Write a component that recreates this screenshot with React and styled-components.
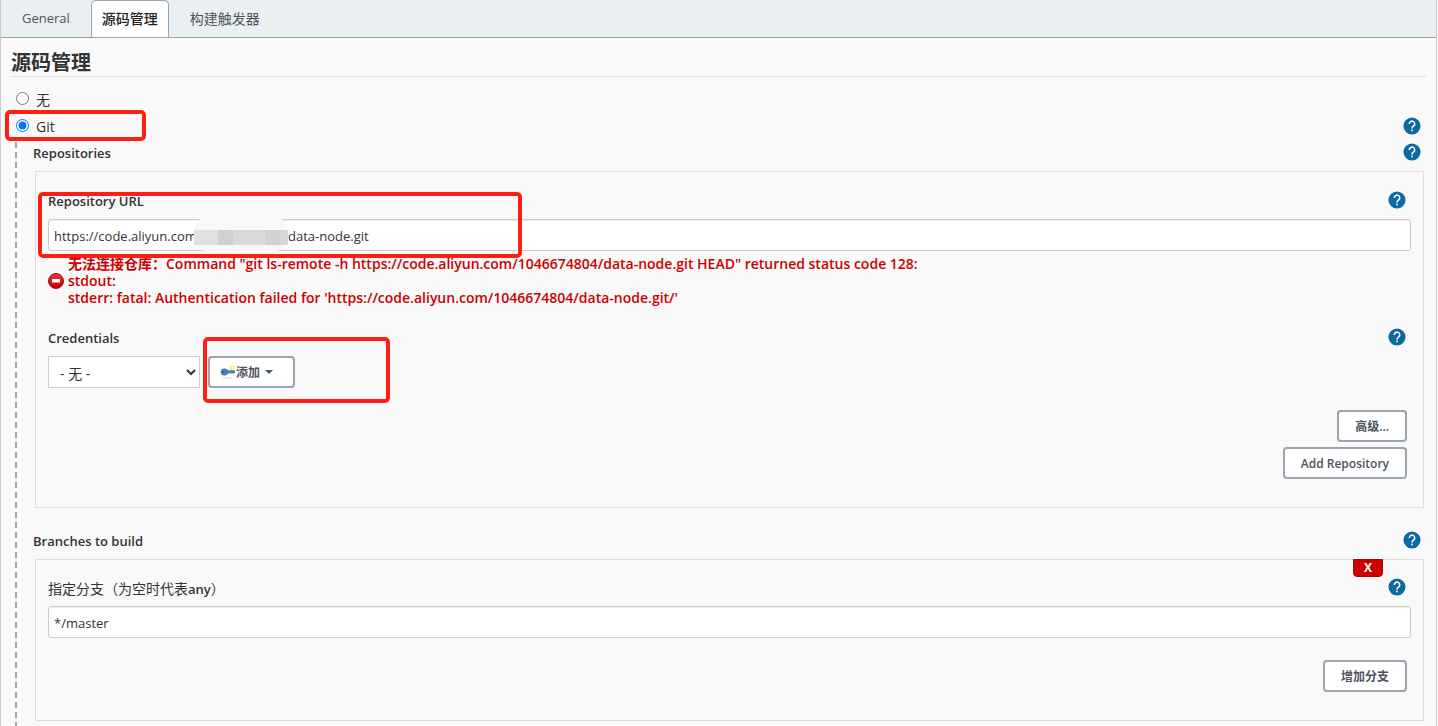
import { useState } from 'react'
import styled, { createGlobalStyle, css } from 'styled-components'

const tabs = ['General', '源码管理', '构建触发器']

const HelpIcon = () => (
  <svg width="18" height="18" viewBox="0 0 24 24" aria-hidden="true">
    <circle cx="12" cy="12" r="11.4" fill="#0b6aa2" />
    <path d="M8.4 9.2a3.6 3.6 0 1 1 5.9 2.7c-1.3 1.1-2.3 1.7-2.3 3.4" fill="none" stroke="#fff" strokeWidth="2.1" />
    <rect x="10.9" y="16.8" width="2.2" height="2.2" fill="#fff" />
  </svg>
)

const Help = ({ topic }) => (
  <HelpLink href="#help" aria-label={`Help for ${topic}`}>
    <HelpIcon />
  </HelpLink>
)

const ErrorIcon = () => (
  <svg width="16" height="16" viewBox="0 0 16 16" aria-hidden="true">
    <defs>
      <linearGradient id="stop" x1="0" y1="0" x2="0" y2="1">
        <stop offset="0" stopColor="#e8373b" />
        <stop offset="1" stopColor="#c00008" />
      </linearGradient>
    </defs>
    <circle cx="8" cy="8" r="7.5" fill="url(#stop)" stroke="#9c0a10" />
    <rect x="4" y="6" width="8" height="3.4" rx="0.6" fill="#fff" />
  </svg>
)

const KeyIcon = () => (
  <svg width="16" height="16" viewBox="0 0 16 16" aria-hidden="true">
    <ellipse cx="7" cy="13.8" rx="6" ry="0.9" fill="#e6e6e6" />
    <path d="M7 6.2h7.4l.6 1v1.6l-1.4.9-1-.8-1 .9-1.2-.8-1 .6H7z" fill="#4a7fb8" />
    <ellipse cx="4.4" cy="8" rx="3.5" ry="3.3" fill="#4a7fb8" stroke="#3f6ea3" strokeWidth="0.6" />
    <circle cx="2.6" cy="7.8" r="0.8" fill="#2a5184" />
    <circle cx="11.8" cy="3.6" r="2.4" fill="#fdf04c" />
    <circle cx="11.8" cy="3.6" r="1" fill="#fffce0" />
  </svg>
)

export default function App() {
  const [activeTab, setActiveTab] = useState('源码管理')
  const [scm, setScm] = useState('git')
  const [url, setUrl] = useState('https://code.aliyun.com/xxxxxxxxxxxx/data-node.git')
  const [branch, setBranch] = useState('*/master')

  return (
    <>
      <GlobalStyle />
      <Page>
        <TabBar>
          {tabs.map((tab) => (
            <Tab
              key={tab}
              type="button"
              $active={tab === activeTab}
              $small={tab === 'General'}
              onClick={() => setActiveTab(tab)}
            >
              {tab}
            </Tab>
          ))}
        </TabBar>
        <Form onSubmit={(e) => e.preventDefault()}>
          <Heading>源码管理</Heading>
          <RadioRow>
            <RadioLabel>
              <Radio type="radio" name="scm" checked={scm === 'none'} onChange={() => setScm('none')} />
              无
            </RadioLabel>
          </RadioRow>
          <RadioRow>
            <RadioLabel>
              <Radio type="radio" name="scm" checked={scm === 'git'} onChange={() => setScm('git')} />
              Git
            </RadioLabel>
            <Help topic="Git" />
            <GitMark />
          </RadioRow>

          <Nested>
            <LabelRow>
              <span>Repositories</span>
              <Help topic="Repositories" />
            </LabelRow>
            <Box>
              <Field>
                <LabelRow>
                  <label htmlFor="url">Repository URL</label>
                  <Help topic="Repository URL" />
                </LabelRow>
                <TextInput id="url" type="text" value={url} onChange={(e) => setUrl(e.target.value)} />
                <Mosaic>
                  <Pixel $color="#dfe0e0" $grow={3} />
                  <Pixel $color="#cfd0d0" $grow={2} />
                  <Pixel $color="#d9d9d9" $grow={4} />
                  <Pixel $color="#d1d1d1" $grow={2} />
                  <Pixel $color="#d7d7d6" $grow={1} />
                </Mosaic>
                <UrlMark />
              </Field>
              <ErrorMessage role="alert">
                <ErrorIcon />
                <div>
                  无法连接仓库：Command "git ls-remote -h https://code.aliyun.com/1046674804/data-node.git HEAD" returned status code 128:
                  <br />
                  stdout:
                  <br />
                  stderr: fatal: Authentication failed for 'https://code.aliyun.com/1046674804/data-node.git/'
                </div>
              </ErrorMessage>
              <LabelRow>
                <label htmlFor="credentials">Credentials</label>
                <Help topic="Credentials" />
              </LabelRow>
              <Credentials>
                <Select id="credentials" defaultValue="none">
                  <option value="none">- 无 -</option>
                </Select>
                <AddWrapper>
                  <Button type="button" $compact>
                    <KeyIcon />
                    添加
                    <Caret />
                  </Button>
                  <AddMark />
                </AddWrapper>
              </Credentials>
              <Actions>
                <Button type="button">高级...</Button>
                <Button type="button">Add Repository</Button>
              </Actions>
            </Box>

            <BranchesRow>
              <span>Branches to build</span>
              <Help topic="Branches to build" />
            </BranchesRow>
            <Box>
              <DeleteButton type="button" aria-label="Delete branch">X</DeleteButton>
              <LabelRow>
                <BranchLabel htmlFor="branch">指定分支（为空时代表<b>any</b>）</BranchLabel>
                <Help topic="any" />
              </LabelRow>
              <TextInput id="branch" type="text" value={branch} onChange={(e) => setBranch(e.target.value)} />
              <Actions>
                <Button type="button">增加分支</Button>
              </Actions>
            </Box>
          </Nested>
        </Form>
      </Page>
    </>
  )
}

const GlobalStyle = createGlobalStyle`
  * {
    box-sizing: border-box;
  }
  body {
    margin: 0;
    background-color: #f9f9f9;
    color: #333;
    font-family: "Open Sans", "Noto Sans CJK SC", sans-serif;
    font-size: 13px;
  }
  button, input, select {
    font-family: inherit;
    color: inherit;
  }
`

const Page = styled.main`
  display: flex;
  flex-direction: column;
  min-height: 100vh;
  margin-right: 1px;
  border: 1px solid #ccc;
  border-width: 0 1px;
`

const TabBar = styled.nav`
  display: flex;
  height: 38px;
  padding-left: 10px;
  border-bottom: 1px solid #9aa5af;
  background-color: #eaeff2;
`

const Tab = styled.button`
  height: 37px;
  padding: 0 10px 2px;
  border: 1px solid transparent;
  border-bottom: 0;
  border-radius: 5px 5px 0 0;
  background: none;
  color: #4d545d;
  font-size: ${(props) => (props.$small ? '13px' : '14px')};
  & + & {
    margin-left: 10px;
  }
  ${(props) => props.$active && css`
    border-color: #9aa5af;
    background-color: #fff;
    color: #222;
    font-weight: 500;
  `}
`

const Form = styled.form`
  display: flex;
  flex: 1;
  flex-direction: column;
  padding: 0 10px;
`

const Heading = styled.h1`
  margin: 0 0 9px;
  padding-top: 12px;
  border-bottom: 1px solid #ddd;
  font-size: 20px;
  font-weight: bold;
  line-height: 26px;
`

const RadioRow = styled.div`
  position: relative;
  display: flex;
  align-items: center;
  justify-content: space-between;
  height: 27px;
  padding: 0 5px;
`

const RadioLabel = styled.label`
  display: flex;
  align-items: center;
  gap: 7px;
  font-size: 14px;
  line-height: 20px;
`

const Radio = styled.input`
  width: 13px;
  height: 13px;
  margin: 0 0 2px;
`

const HelpLink = styled.a`
  display: flex;
  margin-bottom: 2px;
`

const Nested = styled.section`
  flex: 1;
  margin-left: 4px;
  padding: 0 0 6px 18px;
  background: repeating-linear-gradient(#a6a6a6 0 6px, transparent 6px 10px) 0 2px / 2px 100% no-repeat;
`

const LabelRow = styled.div`
  display: flex;
  align-items: center;
  justify-content: space-between;
  height: 26px;
  margin-bottom: 5px;
  padding-right: 5px;
  font-weight: 600;
`

const BranchesRow = styled(LabelRow)`
  margin-top: 20px;
`

const BranchLabel = styled.label`
  font-size: 14px;
  font-weight: 400;
  b {
    font-size: 13px;
    font-weight: 600;
  }
`

const Box = styled.div`
  position: relative;
  margin: 0 2px;
  padding: 15px 12px 28px;
  border: 1px solid #ddd;
`

const Field = styled.div`
  position: relative;
  margin-top: 1px;
`

const TextInput = styled.input`
  display: block;
  width: 100%;
  height: 32px;
  padding: 1px 5px 0;
  border: 1px solid #ccc;
  border-radius: 3px;
  background-color: #fff;
  box-shadow: inset 0 1px 1px rgba(0, 0, 0, 0.075);
  font-size: 13px;
`

const ErrorMessage = styled.div`
  display: flex;
  align-items: center;
  gap: 4px;
  margin: 4px 0 19px;
  color: #c00;
  font-size: 14px;
  font-weight: 600;
  line-height: 17px;
  svg {
    flex-shrink: 0;
  }
`

const Credentials = styled.div`
  display: flex;
  gap: 8px;
`

const Select = styled.select`
  width: 152px;
  height: 32px;
  padding: 2px 0 0 7px;
  border: 1px solid #ccc;
  background-color: #fff;
  font-size: 14px;
`

const Button = styled.button`
  display: flex;
  align-items: center;
  height: 32px;
  padding: 0 ${(props) => (props.$compact ? '20px 0 10px' : '16px')};
  border: 2px solid #9aa5af;
  border-radius: 4px;
  background-color: #fff;
  color: #4d545d;
  font-size: 12px;
  font-weight: 600;
`

const Caret = styled.span`
  margin-left: 5px;
  border: 4px solid transparent;
  border-top-color: currentColor;
  border-bottom: 0;
`

const Actions = styled.div`
  display: flex;
  flex-direction: column;
  align-items: flex-end;
  gap: 5px;
  margin-top: 22px;
  padding-right: 4px;
`

const DeleteButton = styled.button`
  position: absolute;
  top: -1px;
  right: 40px;
  width: 30px;
  height: 18px;
  padding: 0;
  border: 1px solid #b00;
  border-radius: 0 0 4px 4px;
  background-color: #c00;
  color: #fff;
  font-size: 12px;
  font-weight: bold;
  line-height: 16px;
`

const AddWrapper = styled.div`
  position: relative;
`

// highlights lying over the form
const Mark = styled.div`
  position: absolute;
  border: 4px solid #ff1e12;
  border-radius: 5px;
  pointer-events: none;
`

const GitMark = styled(Mark)`
  top: -3px;
  left: -6px;
  width: 141px;
  height: 31px;
`

const UrlMark = styled(Mark)`
  top: 4px;
  left: -10px;
  width: 484px;
  height: 66px;
`

const AddMark = styled(Mark)`
  top: -19px;
  left: -5px;
  width: 187px;
  height: 66px;
`

// covers the account part of the url
const Mosaic = styled.div`
  position: absolute;
  top: 28px;
  left: 146px;
  display: flex;
  width: 94px;
  height: 36px;
  padding: 14px 0 7px;
  border-radius: 16px;
  background-color: #f8f8f8;
  pointer-events: none;
`

const Pixel = styled.span`
  flex: ${(props) => props.$grow};
  background-color: ${(props) => props.$color};
`
